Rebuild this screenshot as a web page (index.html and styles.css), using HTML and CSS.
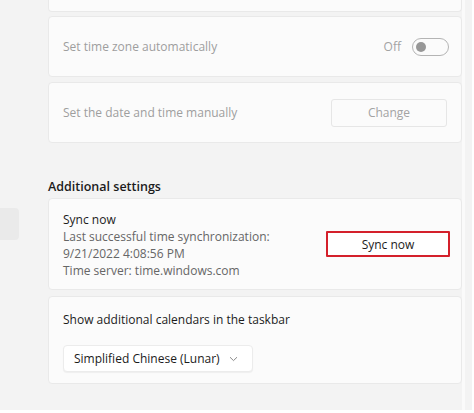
FILE: index.html
```html
<!DOCTYPE html>
<html>
<head>
<meta charset="utf-8">
<link rel="stylesheet" href="styles.css">
</head>
<body>
<div class="window">
  <nav class="nav">
    <div class="nav-item"></div>
  </nav>
  <main class="content">
    <div class="card card-cut"></div>
    <div class="card row dim">
      <span class="label">Set time zone automatically</span>
      <div class="toggle-wrap">
        <span class="off">Off</span>
        <span class="toggle"><span class="knob"></span></span>
      </div>
    </div>
    <div class="card row dim">
      <span class="label">Set the date and time manually</span>
      <button class="btn btn-dim">Change</button>
    </div>
    <h2 class="section-title">Additional settings</h2>
    <div class="card row sync">
      <div class="sync-text">
        <div class="title">Sync now</div>
        <div class="sub">Last successful time synchronization:</div>
        <div class="sub">9/21/2022 4:08:56 PM</div>
        <div class="sub">Time server: time.windows.com</div>
      </div>
      <button class="btn btn-sync">Sync now</button>
    </div>
    <div class="card calendars">
      <div class="title">Show additional calendars in the taskbar</div>
      <div class="dropdown">
        <span>Simplified Chinese (Lunar)</span>
        <svg class="chev" width="9" height="6" viewBox="0 0 9 6"><path d="M1 1.2 L4.5 4.6 L8 1.2" fill="none" stroke="#8a8a8a" stroke-width="1"/></svg>
      </div>
    </div>
  </main>
</div>
</body>
</html>
```
FILE: styles.css
```css
html, body {
  margin: 0;
  padding: 0;
}
body {
  width: 474px;
  height: 413px;
  overflow: hidden;
  background: #ffffff;
  font-family: "Open Sans", "Noto Sans", sans-serif;
  font-size: 12px;
  color: #1b1b1b;
}
.window {
  display: flex;
  height: 410px;
  background: #f3f3f3;
  margin-right: 2px;
}
.nav {
  width: 48px;
  flex: none;
  padding-top: 208px;
  box-sizing: border-box;
}
.nav-item {
  width: 19px;
  height: 32px;
  background: #eaeaea;
  border-radius: 0 4px 4px 0;
}
.content {
  width: 414px;
  flex: none;
  display: flex;
  flex-direction: column;
  border-right: 3px solid #fafafa;
}
.card {
  background: #fbfbfb;
  border: 1px solid #e9e9e9;
  border-radius: 4px;
  box-sizing: border-box;
  margin-bottom: 5px;
}
.card-cut {
  height: 12px;
  border-top: none;
  border-radius: 0 0 4px 4px;
  margin-bottom: 4px;
}
.row {
  display: flex;
  align-items: center;
  justify-content: space-between;
  padding: 0 12px 0 14px;
}
.dim {
  height: 61px;
  color: #9e9e9e;
}
.label {
  font-size: 12px;
}
.toggle-wrap {
  display: flex;
  align-items: center;
  gap: 11px;
}
.off {
  color: #a3a3a3;
}
.toggle {
  width: 37px;
  height: 18px;
  border: 1px solid #b4b4b4;
  border-radius: 10px;
  box-sizing: border-box;
  display: flex;
  align-items: center;
  padding-left: 3px;
}
.knob {
  width: 10px;
  height: 10px;
  border-radius: 50%;
  background: #979797;
}
.btn {
  font-family: inherit;
  font-size: 12px;
  border-radius: 3px;
  box-sizing: border-box;
}
.btn-dim {
  width: 116px;
  height: 28px;
  background: #fbfbfb;
  border: 1px solid #e6e6e6;
  color: #a3a3a3;
  margin-right: 2px;
}
.section-title {
  margin: 0;
  padding: 30px 0 0 0;
  height: 50px;
  box-sizing: border-box;
  font-size: 12.5px;
  font-weight: 600;
  color: #1b1b1b;
}
.sync {
  height: 92px;
  padding-right: 11px;
  margin-bottom: 6px;
}
.sync-text {
  line-height: 17px;
  padding-top: 1px;
}
.title {
  color: #1b1b1b;
}
.sub {
  color: #666666;
}
.btn-sync {
  width: 124px;
  height: 26px;
  background: #ffffff;
  border: 2px solid #d4202b;
  border-radius: 1px;
  color: #1b1b1b;
}
.calendars {
  height: 88px;
  padding: 14px 14px 0 14px;
  display: flex;
  flex-direction: column;
  gap: 17px;
}
.calendars .title {
  line-height: 17px;
}
.dropdown {
  width: 190px;
  height: 27px;
  background: #ffffff;
  border: 1px solid #ececec;
  border-radius: 4px;
  box-shadow: 0 1px 1px rgba(0,0,0,0.05);
  box-sizing: border-box;
  display: flex;
  align-items: center;
  justify-content: space-between;
  padding: 0 14px 0 10px;
}
.chev {
  display: block;
}
```
